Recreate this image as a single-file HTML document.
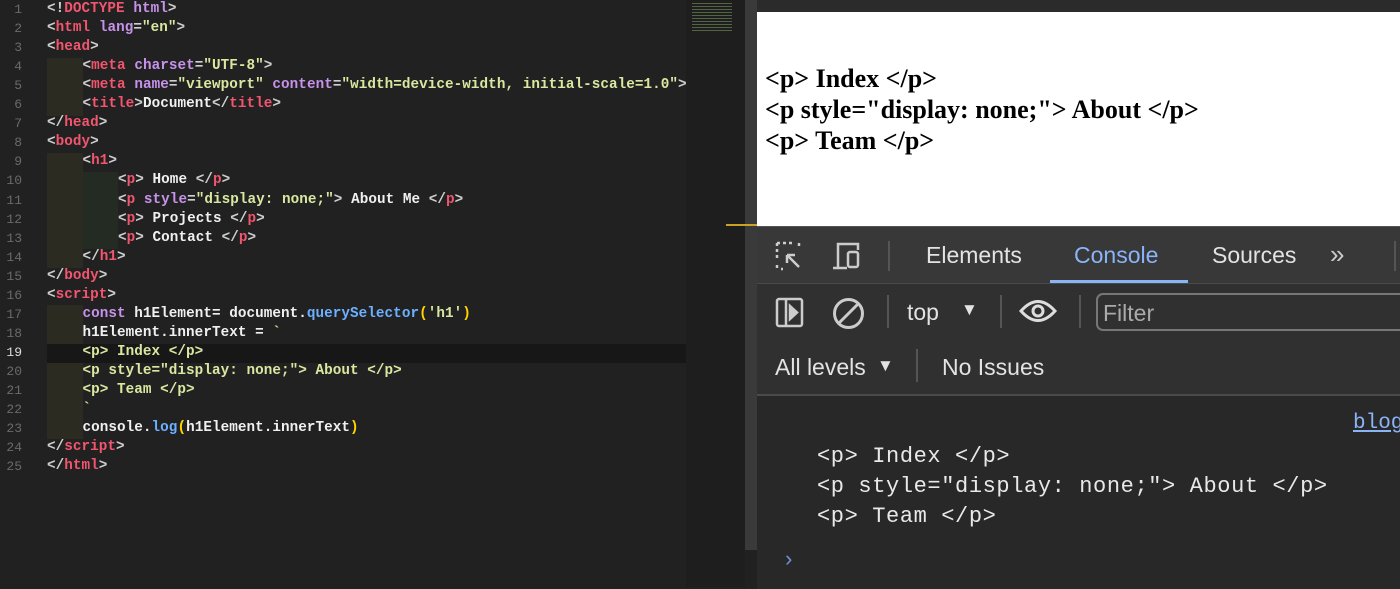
<!DOCTYPE html>
<html><head><style>
body{margin:0;width:1400px;height:587px;background:#212121;position:relative;overflow:hidden;font-family:"Liberation Mono",monospace}
.ed{position:absolute;left:0;top:0;width:686px;height:587px;background:#212121}
.ln{position:absolute;left:0;width:22px;text-align:right;color:#6a6a6a;font-size:13px}
.cl{position:absolute;white-space:pre;font-size:14.3px;color:#f0f0f0;font-weight:bold;letter-spacing:0.05px}
.g{position:absolute;background:#2b2b22}
.p{color:#cfcfcf}.t{color:#f2556e}.a{color:#c792ea}.s{color:#d9e8a0}.f{color:#6cb0ff}.y{color:#ffd400}
.ui{font-family:"Liberation Sans",sans-serif}
</style></head><body>
<div class="ed">
<div class="g" style="left:47px;top:58px;width:36px;height:58px"></div>
<div class="g" style="left:47px;top:153px;width:36px;height:115px"></div>
<div class="g" style="left:83px;top:172px;width:35px;height:77px;background:#232b23"></div>
<div class="g" style="left:47px;top:305px;width:36px;height:134px"></div>
<div style="position:absolute;left:47px;top:344px;width:639px;height:19px;background:#171717"></div>
</div>
<div id="code"></div>
<script>
const L=[
[0,'<span class="p">&lt;!</span><span class="t">DOCTYPE</span> <span class="a">html</span><span class="p">&gt;</span>'],
[0,'<span class="p">&lt;</span><span class="t">html</span> <span class="a">lang</span><span class="p">=</span><span class="s">"en"</span><span class="p">&gt;</span>'],
[0,'<span class="p">&lt;</span><span class="t">head</span><span class="p">&gt;</span>'],
[1,'<span class="p">&lt;</span><span class="t">meta</span> <span class="a">charset</span><span class="p">=</span><span class="s">"UTF-8"</span><span class="p">&gt;</span>'],
[1,'<span class="p">&lt;</span><span class="t">meta</span> <span class="a">name</span><span class="p">=</span><span class="s">"viewport"</span> <span class="a">content</span><span class="p">=</span><span class="s">"width=device-width, initial-scale=1.0"</span><span class="p">&gt;</span>'],
[1,'<span class="p">&lt;</span><span class="t">title</span><span class="p">&gt;</span>Document<span class="p">&lt;/</span><span class="t">title</span><span class="p">&gt;</span>'],
[0,'<span class="p">&lt;/</span><span class="t">head</span><span class="p">&gt;</span>'],
[0,'<span class="p">&lt;</span><span class="t">body</span><span class="p">&gt;</span>'],
[1,'<span class="p">&lt;</span><span class="t">h1</span><span class="p">&gt;</span>'],
[2,'<span class="p">&lt;</span><span class="t">p</span><span class="p">&gt;</span> Home <span class="p">&lt;/</span><span class="t">p</span><span class="p">&gt;</span>'],
[2,'<span class="p">&lt;</span><span class="t">p</span> <span class="a">style</span><span class="p">=</span><span class="s">"display: none;"</span><span class="p">&gt;</span> About Me <span class="p">&lt;/</span><span class="t">p</span><span class="p">&gt;</span>'],
[2,'<span class="p">&lt;</span><span class="t">p</span><span class="p">&gt;</span> Projects <span class="p">&lt;/</span><span class="t">p</span><span class="p">&gt;</span>'],
[2,'<span class="p">&lt;</span><span class="t">p</span><span class="p">&gt;</span> Contact <span class="p">&lt;/</span><span class="t">p</span><span class="p">&gt;</span>'],
[1,'<span class="p">&lt;/</span><span class="t">h1</span><span class="p">&gt;</span>'],
[0,'<span class="p">&lt;/</span><span class="t">body</span><span class="p">&gt;</span>'],
[0,'<span class="p">&lt;</span><span class="t">script</span><span class="p">&gt;</span>'],
[1,'<span class="a">const</span> h1Element= document.<span class="f">querySelector</span><span class="y">(</span><span class="s">\'h1\'</span><span class="y">)</span>'],
[1,'h1Element.innerText = <span class="s">`</span>'],
[1,'<span class="s">&lt;p&gt; Index &lt;/p&gt;</span>'],
[1,'<span class="s">&lt;p style="display: none;"&gt; About &lt;/p&gt;</span>'],
[1,'<span class="s">&lt;p&gt; Team &lt;/p&gt;</span>'],
[1,'<span class="s">`</span>'],
[1,'console.<span class="f">log</span><span class="y">(</span>h1Element.innerText<span class="y">)</span>'],
[0,'<span class="p">&lt;/</span><span class="t">script</span><span class="p">&gt;</span>'],
[0,'<span class="p">&lt;/</span><span class="t">html</span><span class="p">&gt;</span>']];
let h='';L.forEach((l,i)=>{const y=1+i*19.05;h+=`<div class="ln" style="top:${y+1}px;${i==18?'color:#ddd':''}">${i+1}</div><div class="cl" style="left:${47+l[0]*35.5}px;top:${y}px">${l[1]}</div>`});
document.getElementById('code').innerHTML=h;
</script>
<div style="position:absolute;left:686px;top:0;width:59px;height:587px;background:#1e1e1e"></div>
<div style="position:absolute;left:692px;top:3px;width:40px;height:30px;opacity:.5;background:repeating-linear-gradient(#8a6 0 1px,transparent 1px 3px)"></div>
<div style="position:absolute;left:745px;top:0;width:12px;height:550px;background:#3a3a3a"></div>
<div style="position:absolute;left:726px;top:224px;width:31px;height:2px;background:#c9a227"></div>
<div style="position:absolute;left:757px;top:0;width:643px;height:12px;background:#2b2b2b"></div>
<div style="position:absolute;left:757px;top:12px;width:643px;height:214px;background:#fff;font-family:'Liberation Serif',serif;font-weight:bold;font-size:26px;color:#000;line-height:31px">
<div style="position:absolute;left:8px;top:51px;white-space:pre">&lt;p&gt; Index &lt;/p&gt;
&lt;p style="display: none;"&gt; About &lt;/p&gt;
&lt;p&gt; Team &lt;/p&gt;</div></div>
<div class="ui" style="position:absolute;left:757px;top:226px;width:643px;height:57px;background:#383838;border-top:1px solid #555">
<svg style="position:absolute;left:18px;top:14px" width="32" height="32" fill="none" stroke="#ccc" stroke-width="2.5"><path d="M2 2h18M2 2v18M2 24v4M6 28h2M24 2v6" stroke-dasharray="3 3"/><path d="M12 14l12 12M12 14h8M12 14v8"/></svg>
<svg style="position:absolute;left:75px;top:14px" width="34" height="30" fill="none" stroke="#ccc" stroke-width="2.5"><path d="M6 26V3h20v6M1 27h14"/><rect x="16" y="11" width="10" height="15" rx="2"/></svg>
<div style="position:absolute;left:131px;top:14px;width:2px;height:30px;background:#555"></div>
<div style="position:absolute;left:169px;top:15px;font-size:23px;color:#e3e3e3">Elements</div>
<div style="position:absolute;left:317px;top:15px;font-size:23px;color:#8ab4f8">Console</div>
<div style="position:absolute;left:293px;top:53px;width:138px;height:3px;background:#8ab4f8"></div>
<div style="position:absolute;left:455px;top:15px;font-size:23px;color:#e3e3e3">Sources</div>
<div style="position:absolute;left:573px;top:12px;font-size:26px;color:#ccc">&#187;</div>
<div style="position:absolute;left:637px;top:14px;width:2px;height:30px;background:#555"></div>
</div>
<div class="ui" style="position:absolute;left:757px;top:283px;width:643px;height:111px;background:#303030;border-top:1px solid #4a4a4a;color:#e3e3e3">
<svg style="position:absolute;left:18px;top:13px" width="30" height="32" fill="none" stroke="#ccc" stroke-width="2.5"><rect x="2" y="2" width="25" height="27" rx="2"/><path d="M11 2v27"/><path d="M15 9l7 6.5-7 6.5z" fill="#ccc"/></svg>
<svg style="position:absolute;left:75px;top:13px" width="33" height="33" fill="none" stroke="#ccc" stroke-width="3"><circle cx="16.5" cy="16.5" r="14"/><path d="M7 26L26 7"/></svg>
<div style="position:absolute;left:130px;top:11px;width:2px;height:33px;background:#555"></div>
<div style="position:absolute;left:150px;top:15px;font-size:23px">top</div>
<div style="position:absolute;left:204px;top:16px;font-size:17px">&#9660;</div>
<div style="position:absolute;left:243px;top:11px;width:2px;height:33px;background:#555"></div>
<svg style="position:absolute;left:262px;top:14px" width="38" height="26" fill="none" stroke="#ddd" stroke-width="3"><path d="M2 13Q19-6 36 13Q19 32 2 13z"/><circle cx="19" cy="13" r="5"/></svg>
<div style="position:absolute;left:322px;top:11px;width:2px;height:33px;background:#555"></div>
<div style="position:absolute;left:339px;top:9px;width:320px;height:38px;border:2px solid #777;border-radius:7px;box-sizing:border-box"></div>
<div style="position:absolute;left:346px;top:16px;font-size:23px;color:#aaa">Filter</div>
<div style="position:absolute;left:18px;top:70px;font-size:23px">All levels</div>
<div style="position:absolute;left:120px;top:72px;font-size:17px">&#9660;</div>
<div style="position:absolute;left:159px;top:65px;width:2px;height:33px;background:#555"></div>
<div style="position:absolute;left:185px;top:70px;font-size:23px">No Issues</div>
</div>
<div style="position:absolute;left:757px;top:394px;width:643px;height:193px;background:#282828;border-top:2px solid #4a4a4a">
<div style="position:absolute;left:596px;top:16px;font-size:21px;color:#8ab4f8;text-decoration:underline">blog</div>
<div style="position:absolute;left:60px;top:46px;font-size:22px;letter-spacing:0.6px;color:#e8e8e8;line-height:30px;white-space:pre">&lt;p&gt; Index &lt;/p&gt;
&lt;p style="display: none;"&gt; About &lt;/p&gt;
&lt;p&gt; Team &lt;/p&gt;</div>
<div style="position:absolute;left:25px;top:152px;font-size:22px;color:#6a8fd0">&#8250;</div>
</div>
</body></html>
